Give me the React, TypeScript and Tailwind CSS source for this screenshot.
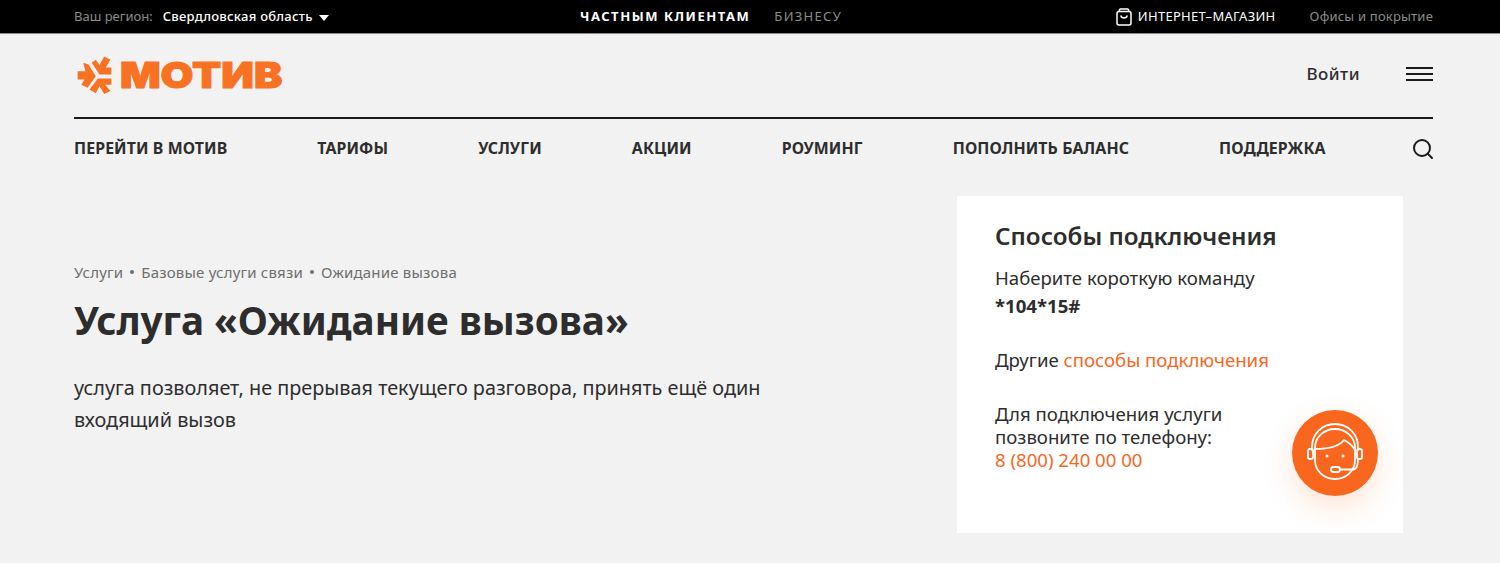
import { Search } from "lucide-react"

const navItems = ["ПЕРЕЙТИ В МОТИВ", "ТАРИФЫ", "УСЛУГИ", "АКЦИИ", "РОУМИНГ", "ПОПОЛНИТЬ БАЛАНС", "ПОДДЕРЖКА"]

function LogoMark() {
  return (
    <svg viewBox="15 10 118 128" className="h-[40px] w-[37px]" fill="#f97122">
      <polygon points="90,72 65,35 78,25 90,42 105,15 125,25 110,50 128,50 128,72" />
      <polygon points="78,78 55,40 38,35 45,62 20,62 20,88 42,88 32,105 52,115" />
      <polygon points="85,85 128,85 128,105 108,105 125,125 105,135 90,110 78,132 58,120" />
    </svg>
  )
}

function AgentIcon() {
  return (
    <svg viewBox="0 0 86 86" className="h-[86px] w-[86px]" fill="none" stroke="#fff" strokeWidth="1.8" strokeLinecap="round" strokeLinejoin="round">
      <path d="M20 40V37C20 24 30 14 43 14S66 24 66 37V40" />
      <path d="M23 40V38C23 27 32 19 43 19S63 27 63 38V40" />
      <rect x="16" y="39" width="5" height="10" rx="2" />
      <rect x="65" y="39" width="5" height="10" rx="2" />
      <path d="M23 40V50C23 61 32 69 43 69S63 61 63 50V40" />
      <path d="M23 39C34 39 46 38 52 30C56 32 60 35 63 40" />
      <path d="M48 59.5H61C64 59.5 66 57 66 49" />
      <rect x="39" y="57" width="9" height="5" rx="2.5" />
      <circle cx="35" cy="46" r="0.6" fill="#fff" />
      <circle cx="51" cy="46" r="0.6" fill="#fff" />
    </svg>
  )
}

export default function App() {
  return (
    <div className="h-[563px] overflow-hidden bg-[#f2f2f2] text-[#2d2d2d] font-['Noto_Sans',sans-serif]">
      <div className="h-[34px] bg-black border-b border-[#8a8a8a] pl-[74px] pr-[67px] flex items-center text-[13px]">
        <div className="flex items-center w-[506px]">
          <span className="text-[#8c8c8c]">Ваш регион:</span>
          <span className="ml-[10px] text-white font-medium tracking-[0.25px]">Свердловская область</span>
          <span className="ml-[6px] mt-[2px] border-x-[5.5px] border-t-[6px] border-x-transparent border-t-white" />
        </div>
        <div className="flex items-center gap-[24px]">
          <span className="text-white font-bold tracking-[1.55px]">ЧАСТНЫМ КЛИЕНТАМ</span>
          <span className="text-[#8c8c8c] tracking-[1.3px]">БИЗНЕСУ</span>
        </div>
        <div className="flex items-center ml-auto">
          <svg viewBox="0 0 16 18" className="h-[18px] w-[16px]" fill="none" stroke="#fff" strokeWidth="1.5" strokeLinecap="round" strokeLinejoin="round">
            <rect x="1" y="3.5" width="14" height="13.5" rx="2" />
            <path d="M3 3.5L4 1H12L13 3.5" />
            <path d="M5 8C5.5 10.5 10.5 10.5 11 8" />
          </svg>
          <span className="ml-[6px] text-white tracking-[0.3px]">ИНТЕРНЕТ–МАГАЗИН</span>
          <span className="ml-[34px] text-[#8c8c8c] tracking-[0.2px]">Офисы и покрытие</span>
        </div>
      </div>

      <div className="pl-[74px] pr-[67px]">
        <header className="h-[85px] border-b-2 border-[#1a1a1a] flex items-center justify-between">
          <div className="flex items-center gap-[7px] ml-[2px] -mt-[1px]">
            <LogoMark />
            <span className="origin-left scale-x-[1.18] text-[36px] leading-none font-black text-[#f97122] font-['Inter',sans-serif] [-webkit-text-stroke:1px_#f97122]">МОТИВ</span>
          </div>
          <div className="flex items-center gap-[46px] -mt-[3px]">
            <span className="text-[17px] font-medium tracking-[0.5px]">Войти</span>
            <div className="flex flex-col gap-[4px]">
              <div className="h-[2px] w-[27px] bg-[#1a1a1a]" />
              <div className="h-[2px] w-[27px] bg-[#1a1a1a]" />
              <div className="h-[2px] w-[27px] bg-[#1a1a1a]" />
            </div>
          </div>
        </header>

        <nav className="h-[59px] flex items-center justify-between text-[15.85px] font-bold tracking-[0.1px]">
          <div className="flex items-center gap-[90px]">
            {navItems.map((item) => (
              <span key={item} className="whitespace-nowrap">{item}</span>
            ))}
          </div>
          <Search className="h-[24px] w-[24px] -mr-[2px] text-[#1a1a1a]" strokeWidth={2} />
        </nav>
      </div>

      <main className="flex justify-between pl-[74px] pr-[97px] pt-[18px]">
        <section className="pt-[66px] w-[720px]">
          <div className="flex items-center gap-[7px] text-[15px] leading-[20px] tracking-[0.2px] text-[#6e6e6e]">
            <span>Услуги</span>
            <span className="h-[4px] w-[4px] rounded-full bg-[#6e6e6e]" />
            <span>Базовые услуги связи</span>
            <span className="h-[4px] w-[4px] rounded-full bg-[#6e6e6e]" />
            <span>Ожидание вызова</span>
          </div>
          <h1 className="mt-[13px] text-[38.7px] leading-[50px] font-bold">Услуга «Ожидание вызова»</h1>
          <p className="mt-[27px] text-[19.83px] leading-[32px]">
            услуга позволяет, не прерывая текущего разговора, принять ещё один входящий вызов
          </p>
        </section>

        <aside className="relative h-[337px] w-[446px] bg-white pl-[38px] pt-[24px] text-[18.6px]">
          <h2 className="text-[24.2px] leading-[32px] font-semibold">Способы подключения</h2>
          <p className="mt-[12px] leading-[28px]">Наберите короткую команду</p>
          <p className="leading-[28px] font-bold">*104*15#</p>
          <p className="mt-[26px] leading-[28px]">
            Другие <span className="text-[#f9671e]">способы подключения</span>
          </p>
          <p className="mt-[28px] leading-[23px]">
            Для подключения услуги
            <br />
            позвоните по телефону:
            <br />
            <span className="text-[#f9671e]">8 (800) 240 00 00</span>
          </p>
          <div className="absolute left-[335px] top-[214px] h-[86px] w-[86px] rounded-full bg-[#f9671e] shadow-[0_12px_30px_rgba(249,103,30,0.18)]">
            <AgentIcon />
          </div>
        </aside>
      </main>
    </div>
  )
}
